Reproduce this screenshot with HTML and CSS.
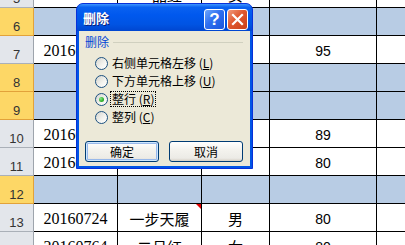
FILE: index.html
```html
<!DOCTYPE html>
<html>
<head>
  <meta charset="utf-8">
  <title>删除</title>
  <link rel="stylesheet" href="styles.css">
</head>
<body>
  <div class="sheet">
    <div class="row">
      <div class="rh">5</div>
      <div class="c date">20160723</div>
      <div class="c cjk">一品红</div>
      <div class="c cjk">女</div>
      <div class="c num">92</div>
      <div class="c"></div>
    </div>
    <div class="row sel">
      <div class="rh">6</div>
      <div class="c"></div><div class="c"></div><div class="c"></div><div class="c"></div><div class="c"></div>
    </div>
    <div class="row">
      <div class="rh">7</div>
      <div class="c date">20160724</div>
      <div class="c cjk">红袖</div>
      <div class="c cjk">女</div>
      <div class="c num">95</div>
      <div class="c"></div>
    </div>
    <div class="row sel">
      <div class="rh">8</div>
      <div class="c"></div><div class="c"></div><div class="c"></div><div class="c"></div><div class="c"></div>
    </div>
    <div class="row sel">
      <div class="rh">9</div>
      <div class="c"></div><div class="c"></div><div class="c"></div><div class="c"></div><div class="c"></div>
    </div>
    <div class="row">
      <div class="rh">10</div>
      <div class="c date">20160724</div>
      <div class="c"></div>
      <div class="c"></div>
      <div class="c num">89</div>
      <div class="c"></div>
    </div>
    <div class="row">
      <div class="rh">11</div>
      <div class="c date">20160724</div>
      <div class="c"></div>
      <div class="c"></div>
      <div class="c num">80</div>
      <div class="c"></div>
    </div>
    <div class="row sel">
      <div class="rh">12</div>
      <div class="c"></div><div class="c"></div><div class="c"></div><div class="c"></div><div class="c"></div>
    </div>
    <div class="row">
      <div class="rh">13</div>
      <div class="c date">20160724</div>
      <div class="c cjk note">一步天履</div>
      <div class="c cjk">男</div>
      <div class="c num">80</div>
      <div class="c"></div>
    </div>
    <div class="row">
      <div class="rh">14</div>
      <div class="c date">20160764</div>
      <div class="c cjk">二月红</div>
      <div class="c cjk">女</div>
      <div class="c num">80</div>
      <div class="c"></div>
    </div>
  </div>

  <div class="dlg">
    <div class="dlg-title">
      <span class="dlg-caption">删除</span>
      <span class="tbtn help">?</span>
      <span class="tbtn close">
        <svg width="13" height="13" viewBox="0 0 13 13"><path d="M2 2 L11 11 M11 2 L2 11" stroke="#fff" stroke-width="2.2" stroke-linecap="square"/></svg>
      </span>
    </div>
    <div class="dlg-body">
      <div class="group-label"><span>删除</span></div>
      <div class="opts">
        <div class="opt"><span class="radio"></span><span class="opt-text">右侧单元格左移 (<u>L</u>)</span></div>
        <div class="opt"><span class="radio"></span><span class="opt-text">下方单元格上移 (<u>U</u>)</span></div>
        <div class="opt"><span class="radio checked"></span><span class="opt-text focus">整行 (<u>R</u>)</span></div>
        <div class="opt"><span class="radio"></span><span class="opt-text">整列 (<u>C</u>)</span></div>
      </div>
      <div class="btns">
        <button class="btn default">确定</button>
        <button class="btn">取消</button>
      </div>
    </div>
  </div>
</body>
</html>
```

FILE: styles.css
```css
* {
  box-sizing: border-box;
}

body {
  margin: 0;
  width: 405px;
  height: 245px;
  overflow: hidden;
  background: #fff;
  position: relative;
  font-family: "Liberation Sans", Arial, sans-serif;
}

/* spreadsheet */
.sheet {
  margin-top: -20px;
}

.row {
  display: grid;
  grid-template-columns: 34px 84px 84px 68px 107px 1fr;
  height: 28px;
}

.rh {
  background: #e3e6eb;
  border-right: 1px solid #9ea4ac;
  border-bottom: 1px solid #aab0b8;
  color: #333;
  font-size: 13px;
  line-height: 13px;
  display: flex;
  align-items: flex-end;
  justify-content: center;
  padding-bottom: 2px;
}

.row.sel .rh {
  background: #fdd766;
  border-right-color: #e2a23a;
  border-bottom-color: #e2a23a;
}

.c {
  border-right: 1px solid #000;
  border-bottom: 1px solid #000;
  display: flex;
  align-items: flex-end;
  justify-content: center;
  padding-bottom: 4px;
  line-height: 16px;
  color: #000;
  white-space: nowrap;
  overflow: hidden;
}

.c:last-child {
  border-right: none;
}

.row.sel .c {
  background: #b8cce4;
}

.date {
  font-family: "Liberation Serif", "Times New Roman", serif;
  font-size: 16px;
}

.cjk {
  font-family: "Noto Sans CJK SC", sans-serif;
  font-size: 15px;
}

.num {
  font-size: 14px;
}

.note {
  position: relative;
  overflow: visible;
}

.note::after {
  content: "";
  position: absolute;
  top: 0;
  right: 0;
  border-top: 5px solid #e00000;
  border-left: 5px solid transparent;
}

/* dialog */
.dlg {
  position: absolute;
  left: 76px;
  top: 3px;
  width: 177px;
  height: 166px;
  background: #0055e5;
  border: 1px solid #0831d9;
  border-radius: 7px 7px 0 0;
  padding: 0 2px 2px 2px;
  display: flex;
  flex-direction: column;
  font-family: "Noto Sans CJK SC", sans-serif;
  font-size: 12px;
}

.dlg-title {
  height: 27px;
  margin: 0 -2px;
  padding: 0 4px 0 6px;
  border-radius: 6px 6px 0 0;
  background: linear-gradient(to bottom, #3d95ff 0%, #0a62f0 12%, #0058ee 40%, #0054e3 75%, #0046d0 100%);
  display: flex;
  align-items: center;
  gap: 2px;
}

.dlg-caption {
  flex: 1;
  color: #fff;
  font-weight: bold;
  font-size: 13px;
  line-height: 14px;
  text-shadow: 1px 1px 0 #0a1e7a;
  padding-top: 1px;
}

.tbtn {
  width: 21px;
  height: 21px;
  border: 1px solid #fff;
  border-radius: 3px;
  display: flex;
  align-items: center;
  justify-content: center;
  margin-top: 3px;
}

.help {
  background: linear-gradient(135deg, #6ea6fb 0%, #2f6ff0 45%, #1a55dc 100%);
  color: #fff;
  font-family: "Liberation Sans", Arial, sans-serif;
  font-weight: bold;
  font-size: 17px;
  line-height: 17px;
}

.close {
  background: linear-gradient(135deg, #f09a7c 0%, #e0582f 45%, #c9401a 100%);
}

.dlg-body {
  flex: 1;
  background: #ece9d8;
  padding: 4px 7px 0 6px;
}

.group-label {
  display: flex;
  align-items: center;
  gap: 4px;
  height: 14px;
  color: #0046d5;
  line-height: 14px;
}

.group-label::after {
  content: "";
  flex: 1;
  border-top: 1px solid #d0d0bf;
  margin-top: 1px;
}

.opts {
  margin-top: 5px;
  padding-left: 10px;
}

.opt {
  height: 18px;
  display: flex;
  align-items: center;
  gap: 2px;
}

.radio {
  width: 13px;
  height: 13px;
  border: 1px solid #1c5180;
  border-radius: 50%;
  background: linear-gradient(135deg, #d4d4ce 0%, #f4f4f0 60%, #fff 100%);
  display: flex;
  align-items: center;
  justify-content: center;
}

.radio.checked::after {
  content: "";
  width: 5px;
  height: 5px;
  border-radius: 50%;
  background: radial-gradient(circle at 35% 35%, #8be88a 0%, #31b22f 55%, #1c8f1a 100%);
}

.opt-text {
  line-height: 12px;
  padding: 1px;
  border: 1px solid transparent;
  color: #000;
}

.opt-text.focus {
  border: 1px dotted #000;
}

.btns {
  margin-top: 15px;
  display: flex;
  gap: 10px;
}

.btn {
  width: 74px;
  height: 21px;
  border: 1px solid #003c74;
  border-radius: 3px;
  background: linear-gradient(to bottom, #ffffff 0%, #f4f3ee 40%, #ecebe6 85%, #d6d0c5 100%);
  font-family: "Noto Sans CJK SC", sans-serif;
  font-size: 12px;
  line-height: 12px;
  color: #000;
  padding: 0;
}

.btn.default {
  box-shadow: inset 0 0 0 1px #cee7ff, inset 0 0 0 2px #98b8ea;
}
```
